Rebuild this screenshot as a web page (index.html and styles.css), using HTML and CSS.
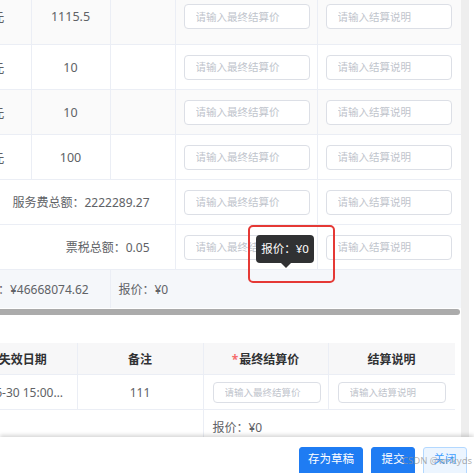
FILE: index.html
```html
<!DOCTYPE html>
<html lang="zh-CN">
<head>
  <meta charset="UTF-8">
  <meta name="viewport" content="width=device-width, initial-scale=1.0">
  <title>结算单</title>
  <link rel="stylesheet" href="styles.css">
</head>
<body>
  <div class="dialog">
    <div class="dialog-body">
      <div class="dialog-content">
        <!-- 明细表格 (已横向/纵向滚动) -->
        <div class="grid-top">
          <table class="data-table table-top">
            <colgroup>
              <col style="width:78px">
              <col style="width:79px">
              <col style="width:65px">
              <col style="width:142px">
              <col style="width:144px">
            </colgroup>
            <tr class="row-first striped">
              <td>万元</td>
              <td>1115.5</td>
              <td></td>
              <td><input class="cell-input" placeholder="请输入最终结算价"></td>
              <td><input class="cell-input" placeholder="请输入结算说明"></td>
            </tr>
            <tr>
              <td>万元</td>
              <td>10</td>
              <td></td>
              <td><input class="cell-input" placeholder="请输入最终结算价"></td>
              <td><input class="cell-input" placeholder="请输入结算说明"></td>
            </tr>
            <tr class="striped">
              <td>万元</td>
              <td>10</td>
              <td></td>
              <td><input class="cell-input" placeholder="请输入最终结算价"></td>
              <td><input class="cell-input" placeholder="请输入结算说明"></td>
            </tr>
            <tr>
              <td>万元</td>
              <td>100</td>
              <td></td>
              <td><input class="cell-input" placeholder="请输入最终结算价"></td>
              <td><input class="cell-input" placeholder="请输入结算说明"></td>
            </tr>
            <tr>
              <td colspan="3" class="cell-total">服务费总额：2222289.27</td>
              <td><input class="cell-input" placeholder="请输入最终结算价"></td>
              <td><input class="cell-input" placeholder="请输入结算说明"></td>
            </tr>
            <tr>
              <td colspan="3" class="cell-total">票税总额：0.05</td>
              <td><input class="cell-input" placeholder="请输入最终结算价"></td>
              <td><input class="cell-input" placeholder="请输入结算说明"></td>
            </tr>
            <tr class="row-sum">
              <td colspan="2" class="cell-sum">总价：¥46668074.62</td>
              <td colspan="3" class="cell-sum-quote">报价：¥0</td>
            </tr>
          </table>
        </div>
        <div class="hscroll"></div>

        <!-- 其他费用表格 -->
        <div class="grid-bottom">
          <table class="data-table table-bottom">
            <colgroup>
              <col style="width:132px">
              <col style="width:126px">
              <col style="width:125px">
              <col style="width:127px">
            </colgroup>
            <tr class="row-head">
              <th>报价失效日期</th>
              <th>备注</th>
              <th><span class="required">*</span>最终结算价</th>
              <th>结算说明</th>
            </tr>
            <tr class="row-data">
              <td class="cell-ellipsis">2023-06-30 15:00:00</td>
              <td>111</td>
              <td><input class="cell-input small" placeholder="请输入最终结算价"></td>
              <td><input class="cell-input small" placeholder="请输入结算说明"></td>
            </tr>
            <tr class="row-quote">
              <td class="no-border"></td>
              <td></td>
              <td colspan="2" class="cell-quote">报价：¥0</td>
            </tr>
          </table>
        </div>
      </div>
      <div class="vscroll"></div>
    </div>

    <footer class="dialog-footer">
      <button class="btn btn-primary">存为草稿</button>
      <button class="btn btn-primary btn-small">提交</button>
      <button class="btn btn-plain btn-small">关闭</button>
      <span class="watermark">CSDN @wnkyds</span>
    </footer>

    <div class="highlight"></div>
    <div class="tooltip">报价：¥0</div>
  </div>
</body>
</html>
```

FILE: styles.css
```css
/* Element 风格的颜色 */
:root {
  --text-main: #606266;
  --text-head: #303133;
  --border: #ebeef5;
  --input-border: #dcdfe6;
  --placeholder: #c0c4cc;
  --stripe-bg: #fafafa;
  --sum-bg: #f5f7fa;
  --head-bg: #f7f7f8;
  --primary: #1f7cf3;
}

body {
  margin: 0;
  padding: 0;
  font-family: 'Noto Sans', 'Noto Sans CJK SC', sans-serif;
  color: var(--text-main);
  background: #ffffff;
  overflow: hidden;
}

.dialog {
  position: relative;
  width: 474px;
  height: 473px;
  overflow: hidden;
}

.dialog-body {
  display: flex;
  height: 437px;
}

.dialog-content {
  width: 461px;
  display: flex;
  flex-direction: column;
}

.vscroll {
  width: 8px;
  background: #eeeeee;
}

/* Tables */
.data-table {
  border-collapse: collapse;
  table-layout: fixed;
  font-size: 12px;
}

.data-table td,
.data-table th {
  padding: 0;
  border-right: 1px solid var(--border);
  border-bottom: 1px solid var(--border);
  text-align: center;
  vertical-align: middle;
  white-space: nowrap;
  overflow: hidden;
}

.grid-top {
  height: 309px;
  overflow: hidden;
}

.table-top {
  width: 508px;
  margin-top: -11px;
  margin-left: -47px;
}

.table-top td {
  height: 44px;
  font-size: 12.5px;
}

.table-top .row-first td {
  height: 55px;
}

.table-top tr.striped td {
  background: var(--stripe-bg);
}

.table-top .cell-total {
  text-align: right;
  padding-right: 25px;
  font-size: 12px;
}

.table-top .row-sum td {
  height: 38px;
  background: var(--sum-bg);
  text-align: left;
  border-bottom: none;
  font-size: 12px;
}

.table-top .row-sum .cell-sum {
  padding-left: 21px;
}

.table-top .row-sum .cell-sum-quote {
  padding-left: 8px;
  border-right: none;
}

.cell-input {
  display: block;
  box-sizing: border-box;
  width: 126px;
  height: 25px;
  margin-left: 8px;
  padding: 0 0 0 11px;
  border: 1px solid var(--input-border);
  border-radius: 4px;
  font-family: inherit;
  font-size: 10.5px;
  color: var(--text-main);
  background: #ffffff;
  outline: none;
}

.cell-input::placeholder {
  color: var(--placeholder);
}

.cell-input.small {
  width: 108px;
  height: 21px;
  margin-left: 9px;
  padding-left: 11px;
  font-size: 9.5px;
}

.hscroll {
  width: 460px;
  height: 6px;
  background: #ababab;
  border-radius: 0 3px 3px 0;
}

/* Bottom table */
.grid-bottom {
  margin-top: 28px;
  width: 455px;
  height: 94px;
  overflow: hidden;
}

.table-bottom {
  width: 510px;
  margin-left: -55px;
}

.table-bottom th {
  height: 31px;
  background: var(--head-bg);
  color: var(--text-head);
  font-weight: bold;
  font-size: 12px;
}

.table-bottom .required {
  color: #f56c6c;
  margin-right: 1px;
}

.table-bottom .row-data td {
  height: 34px;
  font-size: 12px;
}

.table-bottom .cell-ellipsis {
  padding: 0 12px;
  text-overflow: ellipsis;
}

.table-bottom .row-quote td {
  height: 34px;
  border-bottom: none;
}

.table-bottom .row-quote .no-border {
  border-right: none;
}

.table-bottom .cell-quote {
  text-align: left;
  padding-left: 9px;
  font-size: 12px;
}

/* Footer */
.dialog-footer {
  position: relative;
  height: 36px;
  display: flex;
  justify-content: flex-end;
  align-items: flex-start;
  gap: 8px;
  padding: 10px 7px 0 0;
  box-sizing: border-box;
  background: #ffffff;
  box-shadow: 0 -2px 4px rgba(0, 0, 0, 0.16);
}

.btn {
  box-sizing: border-box;
  width: 64px;
  height: 32px;
  padding: 0 0 8px;
  border: 1px solid var(--primary);
  border-radius: 3px;
  font-family: inherit;
  font-size: 11.5px;
  line-height: 22px;
  cursor: pointer;
}

.btn-small {
  width: 44px;
}

.btn-primary {
  background: var(--primary);
  color: #ffffff;
}

.btn-plain {
  background: #ecf5ff;
  border-color: #b3d8ff;
  color: #409eff;
}

.watermark {
  position: absolute;
  left: 402px;
  top: 17px;
  font-size: 9.5px;
  color: rgba(150, 150, 150, 0.75);
  white-space: nowrap;
}

/* Overlays: tooltip + red mark */
.highlight {
  position: absolute;
  left: 248px;
  top: 225px;
  width: 87px;
  height: 58px;
  box-sizing: border-box;
  border: 2.5px solid #e53935;
  border-radius: 5px;
}

.tooltip {
  position: absolute;
  left: 256px;
  top: 235px;
  width: 58px;
  height: 28px;
  box-sizing: border-box;
  background: #303133;
  color: #ffffff;
  border-radius: 4px;
  font-size: 11.5px;
  line-height: 28px;
  text-align: center;
}

.tooltip::after {
  content: "";
  position: absolute;
  left: 25px;
  bottom: -5px;
  border-left: 5px solid transparent;
  border-right: 5px solid transparent;
  border-top: 5px solid #303133;
}
```
